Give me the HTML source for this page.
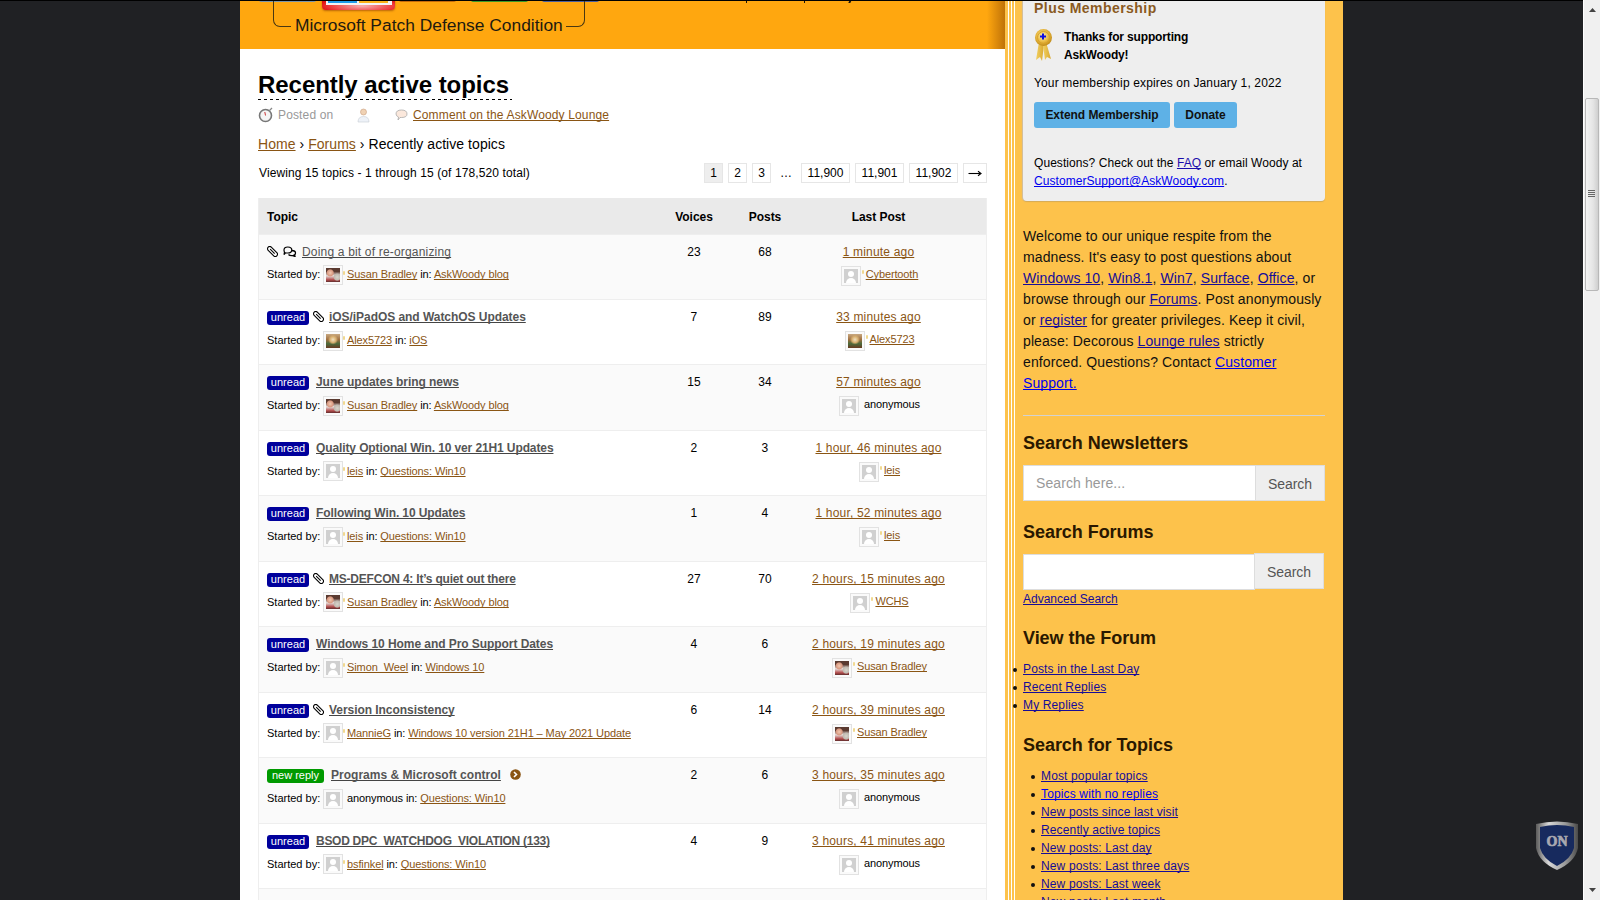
<!DOCTYPE html><html><head><meta charset="utf-8"><style>
*{box-sizing:border-box;margin:0;padding:0}
html,body{width:1600px;height:900px;overflow:hidden;background:#202124;font-family:"Liberation Sans",sans-serif;color:#000}
a{color:#8a5514;text-decoration:underline;text-decoration-skip-ink:none}
.a{position:absolute;white-space:nowrap}
#topline{position:absolute;left:0;top:0;width:1583px;height:1px;background:#000;z-index:5}
#main{position:absolute;left:240px;top:0;width:765px;height:900px;background:#fff;overflow:hidden}
#header{position:absolute;left:0;top:0;width:765px;height:49px;background:linear-gradient(to right,#ffa70f 0,#ffa70f 747px,#bf7208 765px);overflow:hidden}
#side{position:absolute;left:1005px;top:0;width:338px;height:900px;background:#fdc24b;overflow:hidden}
.wl{position:absolute;top:0;width:1px;height:900px;background:#fff}
#scroll{position:absolute;left:1583px;top:0;width:17px;height:900px;background:#f0f0f0}
.f12{font-size:12px;line-height:12px;letter-spacing:.14px}
.f11{font-size:11px;line-height:11px}
.f13{font-size:13px;line-height:13px}
.f14{font-size:14px;line-height:14px;letter-spacing:.1px}
.f18{font-size:18px;line-height:18px}
.b{font-weight:bold;letter-spacing:-.05px}
.tbl{position:absolute;left:18px;top:198px;width:729px;height:720px;border:1px solid #eee;border-top:0}
.hdr{position:absolute;left:0;top:0;width:727px;height:35.56px;background:#eaeaea}
.row{position:absolute;left:0;width:727px;height:65.44px;border-top:1px solid #eee}
.odd{background:#fafafa}.even{background:#fff}
.badge{position:absolute;height:14px;border-radius:3px;color:#fff;font-size:11px;line-height:13px;text-align:center}
.unread{background:#00009c;width:42px}
.newr{background:#009a00;width:57px}
.tl{color:#555;text-decoration-color:#444}
.av{position:absolute;width:20px;height:20px;border:1px solid #e2e2e2;background:#fafafa;padding:2px}
.av i{display:block;width:14px;height:14px}
.dot{position:absolute;width:2px;height:4px;background:#f0d890;border-radius:1px}
.bl{color:#160c98}.bl2{color:#00e}
.pg{position:absolute;top:163px;height:20px;border:1px solid #e6e6e6;font-size:12px;line-height:18px;text-align:center;color:#000}
</style></head><body>
<div id="topline"></div>
<div id="main">
<div id="header">
<div class="a" style="left:19px;top:0;width:57px;height:2px;background:#7a95ab;border-radius:0 0 3px 3px"></div>
<div class="a" style="left:82px;top:-6px;width:73px;height:16px;background:radial-gradient(ellipse 60% 50% at 55% 75%,#f8b0b0 0,#ee4040 70%,#e01010 100%);border-radius:4px;box-shadow:0 1px 2px rgba(120,40,0,.5)"></div>
<div class="a" style="left:86px;top:-6px;width:66px;height:11px;background:#f4f4f4"></div>
<div class="a" style="left:88px;top:-6px;width:29px;height:9px;background:#1e9be8"></div>
<div class="a" style="left:119px;top:-6px;width:29px;height:9px;background:#fbb117"></div>
<div class="a" style="left:159px;top:0;width:57px;height:2px;background:#c56a0a;border-radius:0 0 3px 3px"></div>
<div class="a" style="left:231px;top:0;width:57px;height:2px;background:#3a9a2a;border-radius:0 0 3px 3px"></div>
<div class="a" style="left:302px;top:0;width:57px;height:2px;background:#4a5fa0;border-radius:0 0 3px 3px"></div>
<div class="a" style="left:33px;top:-10px;width:18px;height:36.5px;border-left:1.8px solid #4a3812;border-bottom:1.8px solid #4a3812;border-bottom-left-radius:7px"></div>
<div class="a" style="left:326px;top:-10px;width:19px;height:36.5px;border-right:1.8px solid #4a3812;border-bottom:1.8px solid #4a3812;border-bottom-right-radius:7px"></div>
<div class="a" style="left:505.5px;top:0;width:1.5px;height:3px;background:#1a1408"></div>
<div class="a" style="left:563.5px;top:0;width:1.5px;height:3px;background:#1a1408"></div>
<div class="a" style="left:609px;top:0;width:1.5px;height:3px;background:#1a1408;transform:skewX(-25deg)"></div>
<div class="a" style="left:55px;top:16px;font-size:17.4px;line-height:18px;color:#1e1a10">Microsoft Patch Defense Condition</div>
</div>
<div class="a b" style="left:18px;top:73px;font-size:24px;line-height:24px">Recently active topics</div>
<div class="a" style="left:18px;top:99px;width:254px;height:1px;background:repeating-linear-gradient(to right,#000 0,#000 3px,transparent 3px,transparent 6px)"></div>
<div class="a f12" style="left:38px;top:109px;color:#999">Posted on</div>
<svg class="a" style="left:18px;top:107px" width="16" height="16" viewBox="0 0 16 16"><circle cx="7.5" cy="8.5" r="6" fill="#f4f4f4" stroke="#777" stroke-width="1.6"/><path d="M7.5 8.5 L6.8 5" stroke="#c33" stroke-width="1"/><path d="M11.5 3.5 L14 1" stroke="#888" stroke-width="1.2"/></svg>
<svg class="a" style="left:117px;top:108px" width="13" height="15" viewBox="0 0 13 15"><circle cx="6.5" cy="4" r="3" fill="#f0d2b4" stroke="#c9a080" stroke-width=".6"/><path d="M1 14 Q1 8.5 6.5 8.5 Q12 8.5 12 14 Z" fill="#eef2f8" stroke="#c8ccd4" stroke-width=".6"/></svg>
<svg class="a" style="left:155px;top:109px" width="13" height="12" viewBox="0 0 13 12"><path d="M1 5 Q1 1 6.5 1 Q12 1 12 5 Q12 8.5 6.5 8.5 L5 8.5 L3 11 L3.5 8 Q1 7 1 5 Z" fill="#fbe8dc" stroke="#aaa" stroke-width=".8"/></svg>
<div class="a f12" style="left:173px;top:109px"><a href="#">Comment on the AskWoody Lounge</a></div>
<div class="a f14" style="left:18px;top:137px;color:#000;letter-spacing:.05px"><a href="#">Home</a> › <a href="#">Forums</a> › Recently active topics</div>
<div class="a f12" style="left:19px;top:167px;letter-spacing:.11px">Viewing 15 topics - 1 through 15 (of 178,520 total)</div>
<div class="pg" style="left:464px;width:19px;background:#eee">1</div>
<div class="pg" style="left:488px;width:19px;background:#fff">2</div>
<div class="pg" style="left:512px;width:19px;background:#fff">3</div>
<div class="pg" style="left:561px;width:49px;background:#fff">11,900</div>
<div class="pg" style="left:615px;width:49px;background:#fff">11,901</div>
<div class="pg" style="left:669px;width:49px;background:#fff">11,902</div>
<div class="pg" style="left:723px;width:24px;background:#fff"><svg width="14" height="8" viewBox="0 0 14 8" style="vertical-align:0px"><path d="M0.5 4.5 H12.5" stroke="#000" stroke-width="1.1"/><path d="M10 2.3 L13 4.5 L10 6.7" fill="none" stroke="#000" stroke-width="1.1"/></svg></div>
<div class="a f12" style="left:540px;top:167px">…</div>
<div class="tbl">
<div class="hdr">
<div class="a f12 b" style="left:8px;top:13px">Topic</div>
<div class="a f12 b" style="left:399.5px;top:13px;width:71px;text-align:center">Voices</div>
<div class="a f12 b" style="left:470.5px;top:13px;width:71px;text-align:center">Posts</div>
<div class="a f12 b" style="left:541px;top:13px;width:157px;text-align:center">Last Post</div>
</div>
<div class="row odd" style="top:35.56px">
<svg class="a" style="left:8px;top:11px" width="11" height="11" viewBox="0 0 11 11"><g transform="rotate(-45 5.5 5.5)"><rect x="3.3" y="-0.6" width="4.4" height="12.2" rx="2.2" fill="none" stroke="#000" stroke-width="1.1"/><path d="M5.5 2.2 V8.5" stroke="#000" stroke-width="1"/></g></svg>
<svg class="a" style="left:24px;top:11px" width="14" height="11" viewBox="0 0 14 11"><path d="M8.5 4.5 Q12.5 4.5 12.5 7 Q12.5 8.5 11 9.2 L12.5 10.6 L9.5 9.6 Q6.5 9.8 5.5 8.5" fill="none" stroke="#000" stroke-width="1.3"/><path d="M1 4 Q1 1 4.8 1 Q8.8 1 8.8 4 Q8.8 7 4.8 7 Q3.5 7 2.5 6.8 L1 8.6 L1.5 6.2 Q1 5.3 1 4 Z" fill="#fafafa" stroke="#000" stroke-width="1.2"/></svg>
<div class="a f12" style="left:43px;top:11px;letter-spacing:0.18px"><a class="tl" href="#">Doing a bit of re-organizing</a></div>
<div class="a f11" style="left:8px;top:34px">Started by:</div>
<div class="av" style="left:64px;top:30.5px"><i style="background:radial-gradient(circle at 80% 65%,#d8d4cc 0,#c0bab0 3px,transparent 4px),radial-gradient(circle at 30% 35%,#f0c8b0 0,#d89880 3px,transparent 4px),linear-gradient(to bottom,#5a3a30 0,#5a3a30 25%,#e8e0dc 55%,#b04848 85%,#603030 100%)"></i></div>
<div class="dot" style="left:84px;top:36px"></div>
<div class="a f11" style="left:88px;top:34px;letter-spacing:-.1px"><a href="#">Susan Bradley</a> in: <a href="#">AskWoody blog</a></div>
<div class="a f12" style="left:399.5px;top:11px;width:71px;text-align:center">23</div>
<div class="a f12" style="left:470.5px;top:11px;width:71px;text-align:center">68</div>
<div class="a f12" style="left:541px;top:11px;width:157px;text-align:center;letter-spacing:.18px"><a href="#">1 minute ago</a></div>
<div class="a f11" style="left:542px;top:32px;width:157px;text-align:center;letter-spacing:-.12px"><span style="display:inline-block;width:20px;height:11px;position:relative;vertical-align:0;margin-right:5px"><span class="av" style="left:0;top:-1px"><i style="background:#d0d0d0;position:relative"><b style="position:absolute;left:4px;top:2px;width:6px;height:6px;border-radius:50%;background:#fff"></b><b style="position:absolute;left:2px;top:9px;width:10px;height:5px;border-radius:5px 5px 0 0;background:#fff"></b></i></span><span class="dot" style="left:21px;top:3px"></span></span><a href="#">Cybertooth</a></div>
</div>
<div class="row even" style="top:101.00px">
<div class="badge unread" style="left:8px;top:11px">unread</div>
<svg class="a" style="left:54px;top:11px" width="11" height="11" viewBox="0 0 11 11"><g transform="rotate(-45 5.5 5.5)"><rect x="3.3" y="-0.6" width="4.4" height="12.2" rx="2.2" fill="none" stroke="#000" stroke-width="1.1"/><path d="M5.5 2.2 V8.5" stroke="#000" stroke-width="1"/></g></svg>
<div class="a f12 b" style="left:70px;top:11px;letter-spacing:-0.05px"><a class="tl" href="#">iOS/iPadOS and WatchOS Updates</a></div>
<div class="a f11" style="left:8px;top:35px">Started by:</div>
<div class="av" style="left:64px;top:30.5px"><i style="background:radial-gradient(circle at 50% 40%,#f0e0c0 0,#d8b070 3px,transparent 5px),linear-gradient(to bottom,#c8a880 0,#a07040 40%,#4a6a3a 70%,#6a3a20 100%)"></i></div>
<div class="dot" style="left:84px;top:36px"></div>
<div class="a f11" style="left:88px;top:35px;letter-spacing:-.1px"><a href="#">Alex5723</a> in: <a href="#">iOS</a></div>
<div class="a f12" style="left:399.5px;top:11px;width:71px;text-align:center">7</div>
<div class="a f12" style="left:470.5px;top:11px;width:71px;text-align:center">89</div>
<div class="a f12" style="left:541px;top:11px;width:157px;text-align:center;letter-spacing:.18px"><a href="#">33 minutes ago</a></div>
<div class="a f11" style="left:542px;top:32px;width:157px;text-align:center;letter-spacing:-.12px"><span style="display:inline-block;width:20px;height:11px;position:relative;vertical-align:0;margin-right:5px"><span class="av" style="left:0;top:-1px"><i style="background:radial-gradient(circle at 50% 40%,#f0e0c0 0,#d8b070 3px,transparent 5px),linear-gradient(to bottom,#c8a880 0,#a07040 40%,#4a6a3a 70%,#6a3a20 100%)"></i></span><span class="dot" style="left:21px;top:3px"></span></span><a href="#">Alex5723</a></div>
</div>
<div class="row odd" style="top:166.44px">
<div class="badge unread" style="left:8px;top:11px">unread</div>
<div class="a f12 b" style="left:57px;top:11px;letter-spacing:-0.05px"><a class="tl" href="#">June updates bring news</a></div>
<div class="a f11" style="left:8px;top:35px">Started by:</div>
<div class="av" style="left:64px;top:30.5px"><i style="background:radial-gradient(circle at 80% 65%,#d8d4cc 0,#c0bab0 3px,transparent 4px),radial-gradient(circle at 30% 35%,#f0c8b0 0,#d89880 3px,transparent 4px),linear-gradient(to bottom,#5a3a30 0,#5a3a30 25%,#e8e0dc 55%,#b04848 85%,#603030 100%)"></i></div>
<div class="dot" style="left:84px;top:36px"></div>
<div class="a f11" style="left:88px;top:35px;letter-spacing:-.1px"><a href="#">Susan Bradley</a> in: <a href="#">AskWoody blog</a></div>
<div class="a f12" style="left:399.5px;top:11px;width:71px;text-align:center">15</div>
<div class="a f12" style="left:470.5px;top:11px;width:71px;text-align:center">34</div>
<div class="a f12" style="left:541px;top:11px;width:157px;text-align:center;letter-spacing:.18px"><a href="#">57 minutes ago</a></div>
<div class="a f11" style="left:542px;top:32px;width:157px;text-align:center;letter-spacing:-.12px"><span style="display:inline-block;width:20px;height:11px;position:relative;vertical-align:0;margin-right:5px"><span class="av" style="left:0;top:-1px"><i style="background:#d0d0d0;position:relative"><b style="position:absolute;left:4px;top:2px;width:6px;height:6px;border-radius:50%;background:#fff"></b><b style="position:absolute;left:2px;top:9px;width:10px;height:5px;border-radius:5px 5px 0 0;background:#fff"></b></i></span></span>anonymous</div>
</div>
<div class="row even" style="top:231.88px">
<div class="badge unread" style="left:8px;top:11px">unread</div>
<div class="a f12 b" style="left:57px;top:11px;letter-spacing:-0.11px"><a class="tl" href="#">Quality Optional Win. 10 ver 21H1 Updates</a></div>
<div class="a f11" style="left:8px;top:35px">Started by:</div>
<div class="av" style="left:64px;top:30.5px"><i style="background:#d0d0d0;position:relative"><b style="position:absolute;left:4px;top:2px;width:6px;height:6px;border-radius:50%;background:#fff"></b><b style="position:absolute;left:2px;top:9px;width:10px;height:5px;border-radius:5px 5px 0 0;background:#fff"></b></i></div>
<div class="dot" style="left:84px;top:36px"></div>
<div class="a f11" style="left:88px;top:35px;letter-spacing:-.1px"><a href="#">leis</a> in: <a href="#">Questions: Win10</a></div>
<div class="a f12" style="left:399.5px;top:11px;width:71px;text-align:center">2</div>
<div class="a f12" style="left:470.5px;top:11px;width:71px;text-align:center">3</div>
<div class="a f12" style="left:541px;top:11px;width:157px;text-align:center;letter-spacing:.18px"><a href="#">1 hour, 46 minutes ago</a></div>
<div class="a f11" style="left:542px;top:32px;width:157px;text-align:center;letter-spacing:-.12px"><span style="display:inline-block;width:20px;height:11px;position:relative;vertical-align:0;margin-right:5px"><span class="av" style="left:0;top:-1px"><i style="background:#d0d0d0;position:relative"><b style="position:absolute;left:4px;top:2px;width:6px;height:6px;border-radius:50%;background:#fff"></b><b style="position:absolute;left:2px;top:9px;width:10px;height:5px;border-radius:5px 5px 0 0;background:#fff"></b></i></span><span class="dot" style="left:21px;top:3px"></span></span><a href="#">leis</a></div>
</div>
<div class="row odd" style="top:297.32px">
<div class="badge unread" style="left:8px;top:11px">unread</div>
<div class="a f12 b" style="left:57px;top:11px;letter-spacing:-0.1px"><a class="tl" href="#">Following Win. 10 Updates</a></div>
<div class="a f11" style="left:8px;top:35px">Started by:</div>
<div class="av" style="left:64px;top:30.5px"><i style="background:#d0d0d0;position:relative"><b style="position:absolute;left:4px;top:2px;width:6px;height:6px;border-radius:50%;background:#fff"></b><b style="position:absolute;left:2px;top:9px;width:10px;height:5px;border-radius:5px 5px 0 0;background:#fff"></b></i></div>
<div class="dot" style="left:84px;top:36px"></div>
<div class="a f11" style="left:88px;top:35px;letter-spacing:-.1px"><a href="#">leis</a> in: <a href="#">Questions: Win10</a></div>
<div class="a f12" style="left:399.5px;top:11px;width:71px;text-align:center">1</div>
<div class="a f12" style="left:470.5px;top:11px;width:71px;text-align:center">4</div>
<div class="a f12" style="left:541px;top:11px;width:157px;text-align:center;letter-spacing:.18px"><a href="#">1 hour, 52 minutes ago</a></div>
<div class="a f11" style="left:542px;top:32px;width:157px;text-align:center;letter-spacing:-.12px"><span style="display:inline-block;width:20px;height:11px;position:relative;vertical-align:0;margin-right:5px"><span class="av" style="left:0;top:-1px"><i style="background:#d0d0d0;position:relative"><b style="position:absolute;left:4px;top:2px;width:6px;height:6px;border-radius:50%;background:#fff"></b><b style="position:absolute;left:2px;top:9px;width:10px;height:5px;border-radius:5px 5px 0 0;background:#fff"></b></i></span><span class="dot" style="left:21px;top:3px"></span></span><a href="#">leis</a></div>
</div>
<div class="row even" style="top:362.76px">
<div class="badge unread" style="left:8px;top:11px">unread</div>
<svg class="a" style="left:54px;top:11px" width="11" height="11" viewBox="0 0 11 11"><g transform="rotate(-45 5.5 5.5)"><rect x="3.3" y="-0.6" width="4.4" height="12.2" rx="2.2" fill="none" stroke="#000" stroke-width="1.1"/><path d="M5.5 2.2 V8.5" stroke="#000" stroke-width="1"/></g></svg>
<div class="a f12 b" style="left:70px;top:11px;letter-spacing:-0.21px"><a class="tl" href="#">MS-DEFCON 4: It’s quiet out there</a></div>
<div class="a f11" style="left:8px;top:35px">Started by:</div>
<div class="av" style="left:64px;top:30.5px"><i style="background:radial-gradient(circle at 80% 65%,#d8d4cc 0,#c0bab0 3px,transparent 4px),radial-gradient(circle at 30% 35%,#f0c8b0 0,#d89880 3px,transparent 4px),linear-gradient(to bottom,#5a3a30 0,#5a3a30 25%,#e8e0dc 55%,#b04848 85%,#603030 100%)"></i></div>
<div class="dot" style="left:84px;top:36px"></div>
<div class="a f11" style="left:88px;top:35px;letter-spacing:-.1px"><a href="#">Susan Bradley</a> in: <a href="#">AskWoody blog</a></div>
<div class="a f12" style="left:399.5px;top:11px;width:71px;text-align:center">27</div>
<div class="a f12" style="left:470.5px;top:11px;width:71px;text-align:center">70</div>
<div class="a f12" style="left:541px;top:11px;width:157px;text-align:center;letter-spacing:.18px"><a href="#">2 hours, 15 minutes ago</a></div>
<div class="a f11" style="left:542px;top:32px;width:157px;text-align:center;letter-spacing:-.12px"><span style="display:inline-block;width:20px;height:11px;position:relative;vertical-align:0;margin-right:5px"><span class="av" style="left:0;top:-1px"><i style="background:#d0d0d0;position:relative"><b style="position:absolute;left:4px;top:2px;width:6px;height:6px;border-radius:50%;background:#fff"></b><b style="position:absolute;left:2px;top:9px;width:10px;height:5px;border-radius:5px 5px 0 0;background:#fff"></b></i></span><span class="dot" style="left:21px;top:3px"></span></span><a href="#">WCHS</a></div>
</div>
<div class="row odd" style="top:428.20px">
<div class="badge unread" style="left:8px;top:11px">unread</div>
<div class="a f12 b" style="left:57px;top:11px;letter-spacing:-0.06px"><a class="tl" href="#">Windows 10 Home and Pro Support Dates</a></div>
<div class="a f11" style="left:8px;top:35px">Started by:</div>
<div class="av" style="left:64px;top:30.5px"><i style="background:#d0d0d0;position:relative"><b style="position:absolute;left:4px;top:2px;width:6px;height:6px;border-radius:50%;background:#fff"></b><b style="position:absolute;left:2px;top:9px;width:10px;height:5px;border-radius:5px 5px 0 0;background:#fff"></b></i></div>
<div class="dot" style="left:84px;top:36px"></div>
<div class="a f11" style="left:88px;top:35px;letter-spacing:-.1px"><a href="#">Simon_Weel</a> in: <a href="#">Windows 10</a></div>
<div class="a f12" style="left:399.5px;top:11px;width:71px;text-align:center">4</div>
<div class="a f12" style="left:470.5px;top:11px;width:71px;text-align:center">6</div>
<div class="a f12" style="left:541px;top:11px;width:157px;text-align:center;letter-spacing:.18px"><a href="#">2 hours, 19 minutes ago</a></div>
<div class="a f11" style="left:542px;top:32px;width:157px;text-align:center;letter-spacing:-.12px"><span style="display:inline-block;width:20px;height:11px;position:relative;vertical-align:0;margin-right:5px"><span class="av" style="left:0;top:-1px"><i style="background:radial-gradient(circle at 80% 65%,#d8d4cc 0,#c0bab0 3px,transparent 4px),radial-gradient(circle at 30% 35%,#f0c8b0 0,#d89880 3px,transparent 4px),linear-gradient(to bottom,#5a3a30 0,#5a3a30 25%,#e8e0dc 55%,#b04848 85%,#603030 100%)"></i></span><span class="dot" style="left:21px;top:3px"></span></span><a href="#">Susan Bradley</a></div>
</div>
<div class="row even" style="top:493.64px">
<div class="badge unread" style="left:8px;top:11px">unread</div>
<svg class="a" style="left:54px;top:11px" width="11" height="11" viewBox="0 0 11 11"><g transform="rotate(-45 5.5 5.5)"><rect x="3.3" y="-0.6" width="4.4" height="12.2" rx="2.2" fill="none" stroke="#000" stroke-width="1.1"/><path d="M5.5 2.2 V8.5" stroke="#000" stroke-width="1"/></g></svg>
<div class="a f12 b" style="left:70px;top:11px;letter-spacing:-0.05px"><a class="tl" href="#">Version Inconsistency</a></div>
<div class="a f11" style="left:8px;top:35px">Started by:</div>
<div class="av" style="left:64px;top:30.5px"><i style="background:#d0d0d0;position:relative"><b style="position:absolute;left:4px;top:2px;width:6px;height:6px;border-radius:50%;background:#fff"></b><b style="position:absolute;left:2px;top:9px;width:10px;height:5px;border-radius:5px 5px 0 0;background:#fff"></b></i></div>
<div class="dot" style="left:84px;top:36px"></div>
<div class="a f11" style="left:88px;top:35px;letter-spacing:-.1px"><a href="#">MannieG</a> in: <a href="#">Windows 10 version 21H1 – May 2021 Update</a></div>
<div class="a f12" style="left:399.5px;top:11px;width:71px;text-align:center">6</div>
<div class="a f12" style="left:470.5px;top:11px;width:71px;text-align:center">14</div>
<div class="a f12" style="left:541px;top:11px;width:157px;text-align:center;letter-spacing:.18px"><a href="#">2 hours, 39 minutes ago</a></div>
<div class="a f11" style="left:542px;top:32px;width:157px;text-align:center;letter-spacing:-.12px"><span style="display:inline-block;width:20px;height:11px;position:relative;vertical-align:0;margin-right:5px"><span class="av" style="left:0;top:-1px"><i style="background:radial-gradient(circle at 80% 65%,#d8d4cc 0,#c0bab0 3px,transparent 4px),radial-gradient(circle at 30% 35%,#f0c8b0 0,#d89880 3px,transparent 4px),linear-gradient(to bottom,#5a3a30 0,#5a3a30 25%,#e8e0dc 55%,#b04848 85%,#603030 100%)"></i></span><span class="dot" style="left:21px;top:3px"></span></span><a href="#">Susan Bradley</a></div>
</div>
<div class="row odd" style="top:559.08px">
<div class="badge newr" style="left:8px;top:11px">new reply</div>
<div class="a f12 b" style="left:72px;top:11px;letter-spacing:0.02px"><a class="tl" href="#">Programs &amp; Microsoft control</a> <svg width="11" height="11" viewBox="0 0 11 11" style="vertical-align:-1px;margin-left:6px"><circle cx="5.5" cy="5.5" r="5.3" fill="#8a5514"/><path d="M4 3 L6.5 5.5 L4 8" fill="none" stroke="#fff" stroke-width="1.6"/></svg></div>
<div class="a f11" style="left:8px;top:35px">Started by:</div>
<div class="av" style="left:64px;top:30.5px"><i style="background:#d0d0d0;position:relative"><b style="position:absolute;left:4px;top:2px;width:6px;height:6px;border-radius:50%;background:#fff"></b><b style="position:absolute;left:2px;top:9px;width:10px;height:5px;border-radius:5px 5px 0 0;background:#fff"></b></i></div>
<div class="a f11" style="left:88px;top:35px;letter-spacing:-.1px">anonymous in: <a href="#">Questions: Win10</a></div>
<div class="a f12" style="left:399.5px;top:11px;width:71px;text-align:center">2</div>
<div class="a f12" style="left:470.5px;top:11px;width:71px;text-align:center">6</div>
<div class="a f12" style="left:541px;top:11px;width:157px;text-align:center;letter-spacing:.18px"><a href="#">3 hours, 35 minutes ago</a></div>
<div class="a f11" style="left:542px;top:32px;width:157px;text-align:center;letter-spacing:-.12px"><span style="display:inline-block;width:20px;height:11px;position:relative;vertical-align:0;margin-right:5px"><span class="av" style="left:0;top:-1px"><i style="background:#d0d0d0;position:relative"><b style="position:absolute;left:4px;top:2px;width:6px;height:6px;border-radius:50%;background:#fff"></b><b style="position:absolute;left:2px;top:9px;width:10px;height:5px;border-radius:5px 5px 0 0;background:#fff"></b></i></span></span>anonymous</div>
</div>
<div class="row even" style="top:624.52px">
<div class="badge unread" style="left:8px;top:11px">unread</div>
<div class="a f12 b" style="left:57px;top:11px;letter-spacing:-0.28px"><a class="tl" href="#">BSOD DPC_WATCHDOG_VIOLATION (133)</a></div>
<div class="a f11" style="left:8px;top:35px">Started by:</div>
<div class="av" style="left:64px;top:30.5px"><i style="background:#d0d0d0;position:relative"><b style="position:absolute;left:4px;top:2px;width:6px;height:6px;border-radius:50%;background:#fff"></b><b style="position:absolute;left:2px;top:9px;width:10px;height:5px;border-radius:5px 5px 0 0;background:#fff"></b></i></div>
<div class="dot" style="left:84px;top:36px"></div>
<div class="a f11" style="left:88px;top:35px;letter-spacing:-.1px"><a href="#">bsfinkel</a> in: <a href="#">Questions: Win10</a></div>
<div class="a f12" style="left:399.5px;top:11px;width:71px;text-align:center">4</div>
<div class="a f12" style="left:470.5px;top:11px;width:71px;text-align:center">9</div>
<div class="a f12" style="left:541px;top:11px;width:157px;text-align:center;letter-spacing:.18px"><a href="#">3 hours, 41 minutes ago</a></div>
<div class="a f11" style="left:542px;top:32px;width:157px;text-align:center;letter-spacing:-.12px"><span style="display:inline-block;width:20px;height:11px;position:relative;vertical-align:0;margin-right:5px"><span class="av" style="left:0;top:-1px"><i style="background:#d0d0d0;position:relative"><b style="position:absolute;left:4px;top:2px;width:6px;height:6px;border-radius:50%;background:#fff"></b><b style="position:absolute;left:2px;top:9px;width:10px;height:5px;border-radius:5px 5px 0 0;background:#fff"></b></i></span></span>anonymous</div>
</div>
<div class="row odd" style="top:689.96px">
<div class="badge unread" style="left:8px;top:11px">unread</div>
</div>
</div>
</div>
<div id="side">
<div class="wl" style="left:3px"></div>
<div class="wl" style="left:6px"></div>
<div class="wl" style="left:9px"></div>
<div class="a" style="left:18px;top:-5px;width:302px;height:205.5px;background:#eee;border-radius:4px;box-shadow:-1px 0 1px rgba(190,190,200,.7),0 1px 1px rgba(150,130,90,.35)"></div>
<div class="a b" style="left:29px;top:1px;font-size:14px;line-height:14px;letter-spacing:.45px;color:#8a5a22">Plus Membership</div>
<div class="a" style="left:29px;top:28px;width:19px;height:33px"><svg width="19" height="33" viewBox="0 0 19 33"><defs><radialGradient id="gm" cx="45%" cy="40%" r="60%"><stop offset="0" stop-color="#fff2b0"/><stop offset=".6" stop-color="#e8b840"/><stop offset="1" stop-color="#c08a18"/></radialGradient><linearGradient id="gr" x1="0" x2="1"><stop offset="0" stop-color="#f2d060"/><stop offset="1" stop-color="#d8a830"/></linearGradient></defs><path d="M5 14 L2 32 L6 29 L8 33 L10 17 Z" fill="url(#gr)"/><path d="M12 14 L17 31 L13 29 L11 32 L9 17 Z" fill="url(#gr)"/><circle cx="9.5" cy="9.5" r="8.5" fill="url(#gm)"/><circle cx="9.5" cy="9.5" r="6" fill="none" stroke="#d9a32a" stroke-width="1"/><path d="M9 5.5v6M6 8.5h6" stroke="#1010e0" stroke-width="2"/></svg></div>
<div class="a b f12" style="left:59px;top:29px;line-height:17.5px;letter-spacing:-.15px">Thanks for supporting<br>AskWoody!</div>
<div class="a f12" style="left:29px;top:77px">Your membership expires on January 1, 2022</div>
<div class="a b f12" style="left:29px;top:102px;width:136px;height:26px;line-height:26px;background:#5eb1e6;border-radius:3px;text-align:center;color:#111">Extend Membership</div>
<div class="a b f12" style="left:169px;top:102px;width:63px;height:26px;line-height:26px;background:#5eb1e6;border-radius:3px;text-align:center;color:#111">Donate</div>
<div class="a f12" style="left:29px;top:154px;line-height:18px;letter-spacing:.06px">Questions? Check out the <a style="color:#1a0dab" href="#">FAQ</a> or email Woody at<br><a style="color:#00e" href="#">CustomerSupport@AskWoody.com</a>.</div>
<div class="a f14" style="left:18px;top:226px;line-height:21px;color:#111">Welcome to our unique respite from the<br>madness. It's easy to post questions about<br><a class="bl" href="#">Windows 10</a>, <a class="bl" href="#">Win8.1</a>, <a class="bl" href="#">Win7</a>, <a class="bl" href="#">Surface</a>, <a class="bl" href="#">Office</a>, or<br>browse through our <a class="bl" href="#">Forums</a>. Post anonymously<br>or <a class="bl" href="#">register</a> for greater privileges. Keep it civil,<br>please: Decorous <a class="bl" href="#">Lounge rules</a> strictly<br>enforced. Questions? Contact <a class="bl2" href="#">Customer<br>Support.</a></div>
<div class="a" style="left:18px;top:415px;width:302px;height:1px;background:#d2d2d2"></div>
<div class="a b f18" style="left:18px;top:434px;color:#2a1800">Search Newsletters</div>
<div class="a" style="left:18px;top:465px;width:233px;height:36px;background:#fff;border:1px solid #ddd"></div>
<div class="a f14" style="left:31px;top:476px;color:#999">Search here...</div>
<div class="a f14" style="left:250px;top:465px;width:70px;height:36px;line-height:36px;background:#eee;border:1px solid #ddd;text-align:center;color:#555;letter-spacing:-.1px">Search</div>
<div class="a b f18" style="left:18px;top:523px;color:#2a1800">Search Forums</div>
<div class="a" style="left:18px;top:554px;width:232px;height:36px;background:#fff;border:1px solid #ddd"></div>
<div class="a f14" style="left:249px;top:553px;width:70px;height:36px;line-height:36px;background:#eee;border:1px solid #ddd;text-align:center;color:#555;letter-spacing:-.1px">Search</div>
<div class="a f12" style="left:18px;top:593px;letter-spacing:0"><a class="bl" href="#">Advanced Search</a></div>
<div class="a b f18" style="left:18px;top:629px;color:#2a1800">View the Forum</div>
<div class="a" style="left:8px;top:668px;width:4px;height:4px;border-radius:50%;background:#111"></div>
<div class="a f12" style="left:18px;top:663px"><a class="bl" href="#">Posts in the Last Day</a></div>
<div class="a" style="left:8px;top:686px;width:4px;height:4px;border-radius:50%;background:#111"></div>
<div class="a f12" style="left:18px;top:681px"><a class="bl" href="#">Recent Replies</a></div>
<div class="a" style="left:8px;top:704px;width:4px;height:4px;border-radius:50%;background:#111"></div>
<div class="a f12" style="left:18px;top:699px"><a class="bl" href="#">My Replies</a></div>
<div class="a b f18" style="left:18px;top:736px;color:#2a1800">Search for Topics</div>
<div class="a" style="left:26px;top:775px;width:4px;height:4px;border-radius:50%;background:#111"></div>
<div class="a f12" style="left:36px;top:770px"><a class="bl" href="#">Most popular topics</a></div>
<div class="a" style="left:26px;top:793px;width:4px;height:4px;border-radius:50%;background:#111"></div>
<div class="a f12" style="left:36px;top:788px"><a class="bl" href="#" style="color:#00e">Topics with no replies</a></div>
<div class="a" style="left:26px;top:811px;width:4px;height:4px;border-radius:50%;background:#111"></div>
<div class="a f12" style="left:36px;top:806px"><a class="bl" href="#">New posts since last visit</a></div>
<div class="a" style="left:26px;top:829px;width:4px;height:4px;border-radius:50%;background:#111"></div>
<div class="a f12" style="left:36px;top:824px"><a class="bl" href="#">Recently active topics</a></div>
<div class="a" style="left:26px;top:847px;width:4px;height:4px;border-radius:50%;background:#111"></div>
<div class="a f12" style="left:36px;top:842px"><a class="bl" href="#">New posts: Last day</a></div>
<div class="a" style="left:26px;top:865px;width:4px;height:4px;border-radius:50%;background:#111"></div>
<div class="a f12" style="left:36px;top:860px"><a class="bl" href="#">New posts: Last three days</a></div>
<div class="a" style="left:26px;top:883px;width:4px;height:4px;border-radius:50%;background:#111"></div>
<div class="a f12" style="left:36px;top:878px"><a class="bl" href="#">New posts: Last week</a></div>
<div class="a" style="left:26px;top:901px;width:4px;height:4px;border-radius:50%;background:#111"></div>
<div class="a f12" style="left:36px;top:896px"><a class="bl" href="#">New posts: Last month</a></div>
</div>
<div id="scroll"><div class="a" style="left:0;top:0;width:1px;height:900px;background:#fff"></div><svg class="a" style="left:0;top:0" width="17" height="900"><path d="M6 12 L9.5 8 L13 12 Z" fill="#444"/><path d="M6 888 L9.5 892 L13 888 Z" fill="#444"/></svg><div class="a" style="left:1.6px;top:97.6px;width:14px;height:193px;border:1px solid #b8b8b8;border-radius:2px;background:linear-gradient(to right,#f4f4f4,#e4e4e4 60%,#cfcfcf)"></div><div class="a" style="left:5px;top:190px;width:7px;height:1px;background:#666;box-shadow:0 2px 0 #666,0 4px 0 #666,0 6px 0 #666"></div></div>
<svg class="a" style="left:1535px;top:820px" width="44" height="51" viewBox="0 0 44 51"><defs><linearGradient id="sg" x1="0" x2="1"><stop offset="0" stop-color="#5a5a5a"/><stop offset=".3" stop-color="#d8d8d8"/><stop offset=".7" stop-color="#9a9a9a"/><stop offset="1" stop-color="#4a4a4a"/></linearGradient></defs><path d="M1 4 Q22 -1 43 4 L43 28 Q40 42 22 50 Q4 42 1 28 Z" fill="url(#sg)"/><path d="M5 7 Q22 3 39 7 L39 28 Q36 39 22 46 Q8 39 5 28 Z" fill="#172a5e"/><text x="22" y="26" text-anchor="middle" font-family="Liberation Serif" font-weight="bold" font-size="14" fill="#a8a8b0" stroke="#a8a8b0" stroke-width=".7">ON</text></svg>
</body></html>
